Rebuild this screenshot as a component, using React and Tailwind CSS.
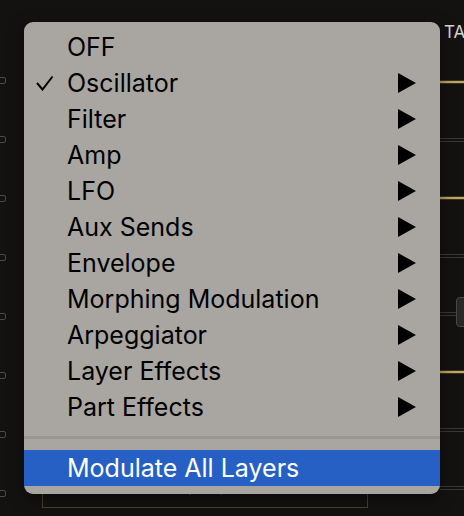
import React from "react";

const items = [
    { label: "OFF", sub: false },
    { label: "Oscillator", sub: true, checked: true },
    { label: "Filter", sub: true },
    { label: "Amp", sub: true },
    { label: "LFO", sub: true },
    { label: "Aux Sends", sub: true },
    { label: "Envelope", sub: true },
    { label: "Morphing Modulation", sub: true },
    { label: "Arpeggiator", sub: true },
    { label: "Layer Effects", sub: true },
    { label: "Part Effects", sub: true },
];

// right-hand rail: what kind of line sits on each row
const rail = ["gold", "gray", "gold", "gray", "knob", "gold", "gray", "gray"];

function Arrow() {
    return (
        <svg width="18" height="20" viewBox="0 0 18 20" className="shrink-0">
            <polygon points="0,0 18,10 0,20" fill="#000" />
        </svg>
    );
}

function Check() {
    return (
        <svg width="18" height="16" viewBox="0 0 18 16">
            <polyline points="1,8 6.5,14.5 16.5,1.5" fill="none" stroke="#000" strokeWidth="2" />
        </svg>
    );
}

function MenuRow({ item }) {
    return (
        <div className="h-[36px] flex items-center pl-[12px] pr-[24px]">
            <span className="w-[31px] flex items-center">{item.checked && <Check />}</span>
            <span className="flex-1">{item.label}</span>
            {item.sub && <Arrow />}
        </div>
    );
}

export default function App() {
    return (
        <div
            className="relative w-[464px] h-[516px] overflow-hidden bg-[#141211] flex"
            style={{ fontFamily: "Inter, 'Noto Sans', sans-serif" }}
        >
            {/* left slider stubs */}
            <div className="w-[24px] flex flex-col gap-[52px] pt-[77px]">
                {Array.from({ length: 8 }).map((_, i) => (
                    <div key={i} className="w-[8px] h-[7px] -ml-[2px] rounded-[2px] border border-[#4d4a47]" />
                ))}
            </div>

            {/* centre area with value box at the bottom */}
            <div className="flex-1 flex flex-col justify-end pb-[8px] pl-[18px] pr-[72px]">
                <div className="h-[20px] border border-[#4a4128] flex justify-center items-start">
                    <span className="-mt-[14px] text-[16px] leading-[20px] text-[#d8c99a]">Any Layer</span>
                </div>
            </div>

            {/* right rail */}
            <div className="w-[24px] flex flex-col">
                <div className="h-[56px] pt-[22px] pl-[4px] text-[17px] leading-[20px] text-[#d6d4d2] whitespace-nowrap">TAB</div>
                <div className="flex flex-col gap-[54px] pt-[24px]">
                    {rail.map((kind, i) => (
                        <div key={i} className="relative h-[4px]">
                            {kind === "gold" ? (
                                <div className="h-[4px] bg-[#bfa960] border-y border-[#3a3324]" />
                            ) : (
                                <div className="h-[4px] border-y border-[#3b3936]" />
                            )}
                            {kind === "knob" && (
                                <div className="absolute left-[16px] -top-[15px] w-[14px] h-[30px] rounded-[4px] bg-[#2a2826] border border-[#4a4845]" />
                            )}
                        </div>
                    ))}
                </div>
            </div>

            {/* popup menu */}
            <div className="absolute left-[24px] top-[22px] w-[416px] h-[472px] rounded-[9px] bg-[#a9a6a2] shadow-[0_4px_16px_rgba(0,0,0,0.5)] pt-[7px] text-[25px] leading-none text-black">
                {items.map((item) => (
                    <MenuRow key={item.label} item={item} />
                ))}
                <div className="h-[25px] flex flex-col justify-center">
                    <div className="h-[3px] bg-[#9a9793]" />
                </div>
                <div className="h-[36px] flex items-center pl-[43px] bg-[#2660c5] text-white">
                    Modulate All Layers
                </div>
            </div>
        </div>
    );
}
